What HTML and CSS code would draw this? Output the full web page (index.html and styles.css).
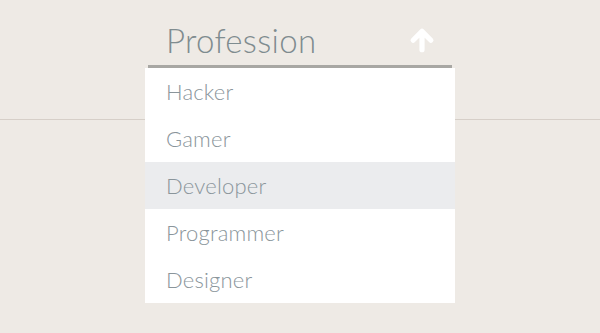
FILE: index.html
```html
<!DOCTYPE html>
<html lang="en">
<head>
    <meta charset="UTF-8">
    <meta name="viewport" content="width=device-width, initial-scale=1.0">
    <title>Profession Dropdown</title>
    <link rel="stylesheet" href="styles.css">
</head>
<body>
    <div class="field">
        <div class="field-head">
            <span class="field-label">Profession</span>
            <svg class="arrow" width="26" height="26" viewBox="0 0 24 24">
                <path d="M12 21V4.5M3.8 12.2L12 4l8.2 8.2" fill="none" stroke="#fff" stroke-width="4.8" stroke-linecap="round" stroke-linejoin="round"/>
            </svg>
        </div>
        <ul class="menu">
            <li>Hacker</li>
            <li>Gamer</li>
            <li class="active">Developer</li>
            <li>Programmer</li>
            <li>Designer</li>
        </ul>
    </div>
    <div class="rule"></div>
</body>
</html>
```

FILE: styles.css
```css
body {
    margin: 0;
    min-height: 100vh;
    background-color: #eeeae5;
    font-family: Lato, "Open Sans", sans-serif;
}

.field {
    position: relative;
    width: 304px;
    margin: 0 auto;
    padding-top: 14px;
}

.field-head {
    display: flex;
    justify-content: space-between;
    align-items: center;
    height: 51px;
    padding: 0 17px 0 18px;
    border-bottom: 3px solid #a8a7a3;
}

.field-label {
    font-size: 33px;
    font-weight: 300;
    letter-spacing: 0.3px;
    color: #7f8c8f;
}

.menu {
    position: absolute;
    top: 100%;
    left: -3px;
    right: -3px;
    z-index: 1;
    margin: 0;
    padding: 0;
    list-style: none;
    background: #fff;
}

.menu li {
    height: 47px;
    line-height: 47px;
    padding-left: 21px;
    font-size: 22px;
    font-weight: 300;
    letter-spacing: 0.2px;
    color: #8a959b;
}

.menu li.active {
    background: #ebecee;
}

.rule {
    height: 1px;
    margin-top: 51px;
    background: #d6cfc8;
}
```
